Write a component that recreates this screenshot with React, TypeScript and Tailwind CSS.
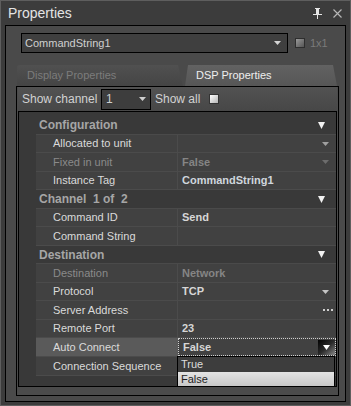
import React from 'react';

type Row =
  | { kind: 'header'; label: string }
  | {
      kind: 'prop';
      name: string;
      value?: string;
      disabled?: boolean;
      arrow?: 'dim' | 'mid' | 'bright';
      dots?: boolean;
      selected?: boolean;
      valueColor?: string;
    };

const rows: Row[] = [
  { kind: 'header', label: 'Configuration' },
  { kind: 'prop', name: 'Allocated to unit', arrow: 'mid' },
  { kind: 'prop', name: 'Fixed in unit', value: 'False', disabled: true, arrow: 'dim' },
  { kind: 'prop', name: 'Instance Tag', value: 'CommandString1', valueColor: 'text-[#cfd6dd]' },
  { kind: 'header', label: 'Channel  1 of  2' },
  { kind: 'prop', name: 'Command ID', value: 'Send' },
  { kind: 'prop', name: 'Command String' },
  { kind: 'header', label: 'Destination' },
  { kind: 'prop', name: 'Destination', value: 'Network', disabled: true },
  { kind: 'prop', name: 'Protocol', value: 'TCP', arrow: 'bright' },
  { kind: 'prop', name: 'Server Address', dots: true },
  { kind: 'prop', name: 'Remote Port', value: '23' },
  { kind: 'prop', name: 'Auto Connect', value: 'False', selected: true },
  { kind: 'prop', name: 'Connection Sequence' },
];

const heights = [19, 18, 19, 18, 19, 18, 19, 18, 19, 18, 19, 18, 19, 19];

function Tri({ color, w = 7, h = 4 }: { color: string; w?: number; h?: number }) {
  return (
    <svg width={w} height={h} viewBox={`0 0 ${w} ${h}`} className="block">
      <polygon points={`0,0 ${w},0 ${w / 2},${h}`} fill={color} />
    </svg>
  );
}

function HeaderRow({ label, tall }: { label: string; tall: boolean }) {
  return (
    <div className={`flex shrink-0 ${tall ? 'h-[19px]' : 'h-[18px]'}`}>
      <div className="w-[17px] shrink-0 bg-[#393939]" />
      <div className="flex flex-1 items-center border-b border-[#4a4a4a] bg-[#393939] pl-[3px] pr-[11px]">
        <span className="whitespace-pre text-[12px] font-bold text-[#a6a6a6]">{label}</span>
        <span className="ml-auto">
          <Tri color="#f2f2f2" w={7} h={7} />
        </span>
      </div>
    </div>
  );
}

function PropRow({ r, tall }: { r: Extract<Row, { kind: 'prop' }>; tall: boolean }) {
  const nameColor = r.disabled ? 'text-[#8a8a8a]' : 'text-[#dadada]';
  const valColor = r.disabled ? 'text-[#858585]' : r.valueColor ?? 'text-[#d6d6d6]';
  return (
    <div className={`flex shrink-0 ${tall ? 'h-[19px]' : 'h-[18px]'}`}>
      <div className="w-[17px] shrink-0 bg-[#393939]" />
      <div className="flex flex-1 border-b border-[#4b4b4b] bg-[#414141]">
        <div
          className={`flex w-[142px] shrink-0 items-center pl-[17px] text-[11px] ${nameColor} ${
            r.selected ? 'bg-[#5a5a5a]' : 'border-r border-[#4b4b4b]'
          }`}
        >
          {r.name}
        </div>
        <div
          className={`flex flex-1 items-center text-[11px] font-bold ${valColor} ${
            r.selected ? 'border border-dotted border-[#d0d0d0] pl-[4px]' : 'pl-[4px]'
          }`}
        >
          <span>{r.value}</span>
          {r.arrow && (
            <span className="ml-auto mr-[7px]">
              <Tri color={r.arrow === 'dim' ? '#6c6c6c' : r.arrow === 'mid' ? '#a0a0a0' : '#c4c4c4'} />
            </span>
          )}
          {r.dots && (
            <span className="ml-auto mr-[3px] flex gap-[2px]">
              <span className="h-[2px] w-[2px] bg-[#cfcfcf]" />
              <span className="h-[2px] w-[2px] bg-[#cfcfcf]" />
              <span className="h-[2px] w-[2px] bg-[#cfcfcf]" />
            </span>
          )}
          {r.selected && (
            <span className="ml-auto flex h-[15px] w-[17px] items-center justify-center bg-gradient-to-br from-[#050505] via-[#2a2a2a] to-[#8a8a8a]">
              <Tri color="#ffffff" w={7} h={5} />
            </span>
          )}
        </div>
      </div>
    </div>
  );
}

export default function App() {
  return (
    <div className="flex h-[406px] w-[351px] flex-col border border-[#5e5e5e] bg-[#3c3c3c] px-[4px] pb-[3px] font-['Liberation_Sans',Arial,sans-serif]">
      {/* Title bar */}
      <div className="flex h-[24px] shrink-0 items-center pl-[3px] pr-[4px]">
        <span className="text-[14px] text-[#e4e4e4]">Properties</span>
        <div className="ml-auto flex items-center gap-[11px]">
          <svg width="9" height="11" viewBox="0 0 9 11">
            <rect x="2" y="0" width="5" height="1" fill="#e6e6e6" />
            <rect x="3" y="1" width="3" height="5" fill="#e6e6e6" />
            <rect x="0" y="6" width="9" height="1" fill="#e6e6e6" />
            <rect x="4" y="7" width="1" height="4" fill="#e6e6e6" />
          </svg>
          <svg width="9" height="9" viewBox="0 0 9 9">
            <path d="M0.5 0.5 L8.5 8.5 M8.5 0.5 L0.5 8.5" stroke="#b8b8b8" strokeWidth="1.1" />
          </svg>
        </div>
      </div>

      {/* Panel */}
      <div className="flex flex-1 flex-col border border-black bg-[#4a4a4a] pb-[5px] pl-[10px] pr-[6px] pt-[7px]">
        <div className="ml-[5px] flex h-[20px] shrink-0 items-center">
          <div className="flex h-[20px] w-[267px] items-center border border-black bg-[#3f3f3f] pl-[3px] pr-[6px]">
            <span className="text-[11px] text-[#cfcfcf]">CommandString1</span>
            <span className="ml-auto">
              <Tri color="#d4d4d4" w={7} h={4} />
            </span>
          </div>
          <div className="ml-[7px] h-[10px] w-[10px] border border-[#2e2e2e] bg-gradient-to-br from-[#9a9a9a] to-[#555555]" />
          <span className="ml-[5px] text-[11px] text-[#7a7a7a]">1x1</span>
        </div>

        {/* Tabs */}
        <div className="mt-[12px] flex h-[21px] shrink-0 items-end">
          <div className="ml-[1px] flex h-[21px] w-[166px] items-center rounded-tl-[3px] bg-gradient-to-b from-[#505050] to-[#454545] pl-[10px] text-[11px] text-[#7c7c7c] [clip-path:polygon(0_0,161px_0,166px_100%,0_100%)]">
            Display Properties
          </div>
          <div className="ml-[2px] flex h-[21px] w-[152px] items-center bg-gradient-to-b from-[#626262] to-[#565656] pl-[11px] text-[11px] text-[#eeeeee] [clip-path:polygon(3px_0,148px_0,152px_100%,0_100%)]">
            DSP Properties
          </div>
        </div>

        {/* Tab content */}
        <div className="flex flex-1 flex-col border border-black bg-[#4b4b4b] px-[1px] pb-[8px]">
          <div className="flex h-[24px] shrink-0 items-center bg-gradient-to-b from-[#525252] to-[#474747] pl-[4px]">
            <span className="w-[79px] text-[12px] text-[#d2d2d2]">Show channel</span>
            <div className="flex h-[21px] w-[50px] items-center border border-black bg-[#3d3d3d] pl-[4px] pr-[4px]">
              <span className="text-[12px] text-[#cfcfcf]">1</span>
              <span className="ml-auto">
                <Tri color="#d0d0d0" w={7} h={4} />
              </span>
            </div>
            <span className="ml-[4px] text-[12px] text-[#d2d2d2]">Show all</span>
            <div className="ml-[9px] h-[10px] w-[10px] border border-[#333] bg-gradient-to-br from-[#ffffff] to-[#b4b4b4]" />
          </div>

          {/* Property grid */}
          <div className="relative flex flex-1 flex-col border border-black bg-[#393939] pt-[4px]">
            {rows.map((r, i) =>
              r.kind === 'header' ? (
                <HeaderRow key={i} label={r.label} tall={heights[i] === 19} />
              ) : (
                <PropRow key={i} r={r} tall={heights[i] === 19} />
              )
            )}
            <div className="flex-1" />

            {/* Open dropdown list */}
            <div className="absolute left-[158px] top-[244px] flex h-[31px] w-[158px] flex-col border border-black bg-[#3d3d3d]">
              <div className="flex h-[15px] items-center pl-[3px] text-[11px] text-[#dcdcdc]">True</div>
              <div className="flex h-[14px] items-center bg-gradient-to-b from-[#e4e4e4] to-[#c8c8c8] pl-[3px] text-[11px] text-[#1e1e1e]">
                False
              </div>
            </div>
          </div>
        </div>
      </div>
    </div>
  );
}
